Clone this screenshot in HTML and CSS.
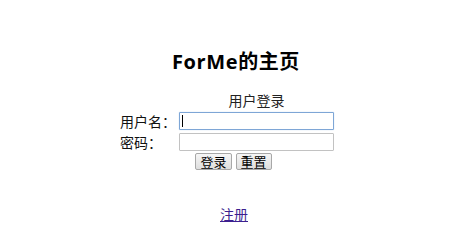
FILE: index.html
```html
<!DOCTYPE html>
<html lang="zh">
<head>
<meta charset="utf-8">
<title>ForMe的主页</title>
<link rel="stylesheet" href="styles.css">
</head>
<body>
<h2 class="title">ForMe的主页</h2>
<form class="login">
  <div class="caption">用户登录</div>
  <label class="label" for="u">用户名：</label>
  <div class="field">
    <input id="u" class="input input-focus" type="text">
    <span class="caret"></span>
  </div>
  <label class="label" for="p">密码：</label>
  <div class="field">
    <input id="p" class="input" type="password">
  </div>
  <div class="actions">
    <button type="button" class="btn">登录</button>
    <button type="reset" class="btn">重置</button>
  </div>
</form>
<div class="links"><a class="reg" href="#">注册</a></div>
</body>
</html>
```
FILE: styles.css
```css
html, body {
  margin: 0;
  padding: 0;
  background: #fff;
}
body {
  font-family: "Noto Sans CJK SC", "Noto Sans", sans-serif;
  font-size: 14px;
  color: #111;
}
.title {
  margin: 49px 0 0 0;
  padding-right: 2px;
  text-align: center;
  font-family: "Open Sans", "Noto Sans CJK SC", sans-serif;
  font-size: 20px;
  font-weight: bold;
  line-height: 26px;
  color: #000;
  letter-spacing: 0.6px;
}
.login {
  display: grid;
  grid-template-columns: 61px 155px;
  grid-auto-rows: auto;
  width: 232px;
  margin: 16px 0 0 118px;
  row-gap: 3px;
}
.caption {
  grid-column: 2;
  text-align: center;
  line-height: 18px;
  color: #222;
}
.label {
  display: flex;
  align-items: center;
  padding-left: 2px;
  line-height: 16px;
  white-space: nowrap;
}
.field {
  position: relative;
  display: flex;
}
.input {
  box-sizing: border-box;
  width: 155px;
  height: 18px;
  margin: 0;
  padding: 0 2px;
  border: 1px solid #c2c2c2;
  border-radius: 1px;
  background: #fff;
  outline: none;
  font: inherit;
}
.input-focus {
  border-color: #7ea6d6;
  box-shadow: 0 0 1px #9dbde6;
}
.caret {
  position: absolute;
  left: 3px;
  top: 3px;
  width: 1px;
  height: 12px;
  background: #000;
}
.actions {
  grid-column: 1 / 3;
  display: flex;
  justify-content: center;
  gap: 4px;
  padding-left: 15px;
  margin-top: -1px;
}
.btn {
  box-sizing: border-box;
  height: 17px;
  padding: 0 4px;
  border: 1px solid #a8a8a8;
  border-radius: 2px;
  background: linear-gradient(#f6f6f6, #dedede);
  font-family: "Noto Sans CJK SC", sans-serif;
  font-size: 13px;
  line-height: 14px;
  color: #000;
}
.links {
  margin-top: 35px;
  text-align: center;
  padding-right: 6px;
  line-height: 18px;
}
.reg {
  color: #3c1f8f;
  text-decoration: underline;
}
```
